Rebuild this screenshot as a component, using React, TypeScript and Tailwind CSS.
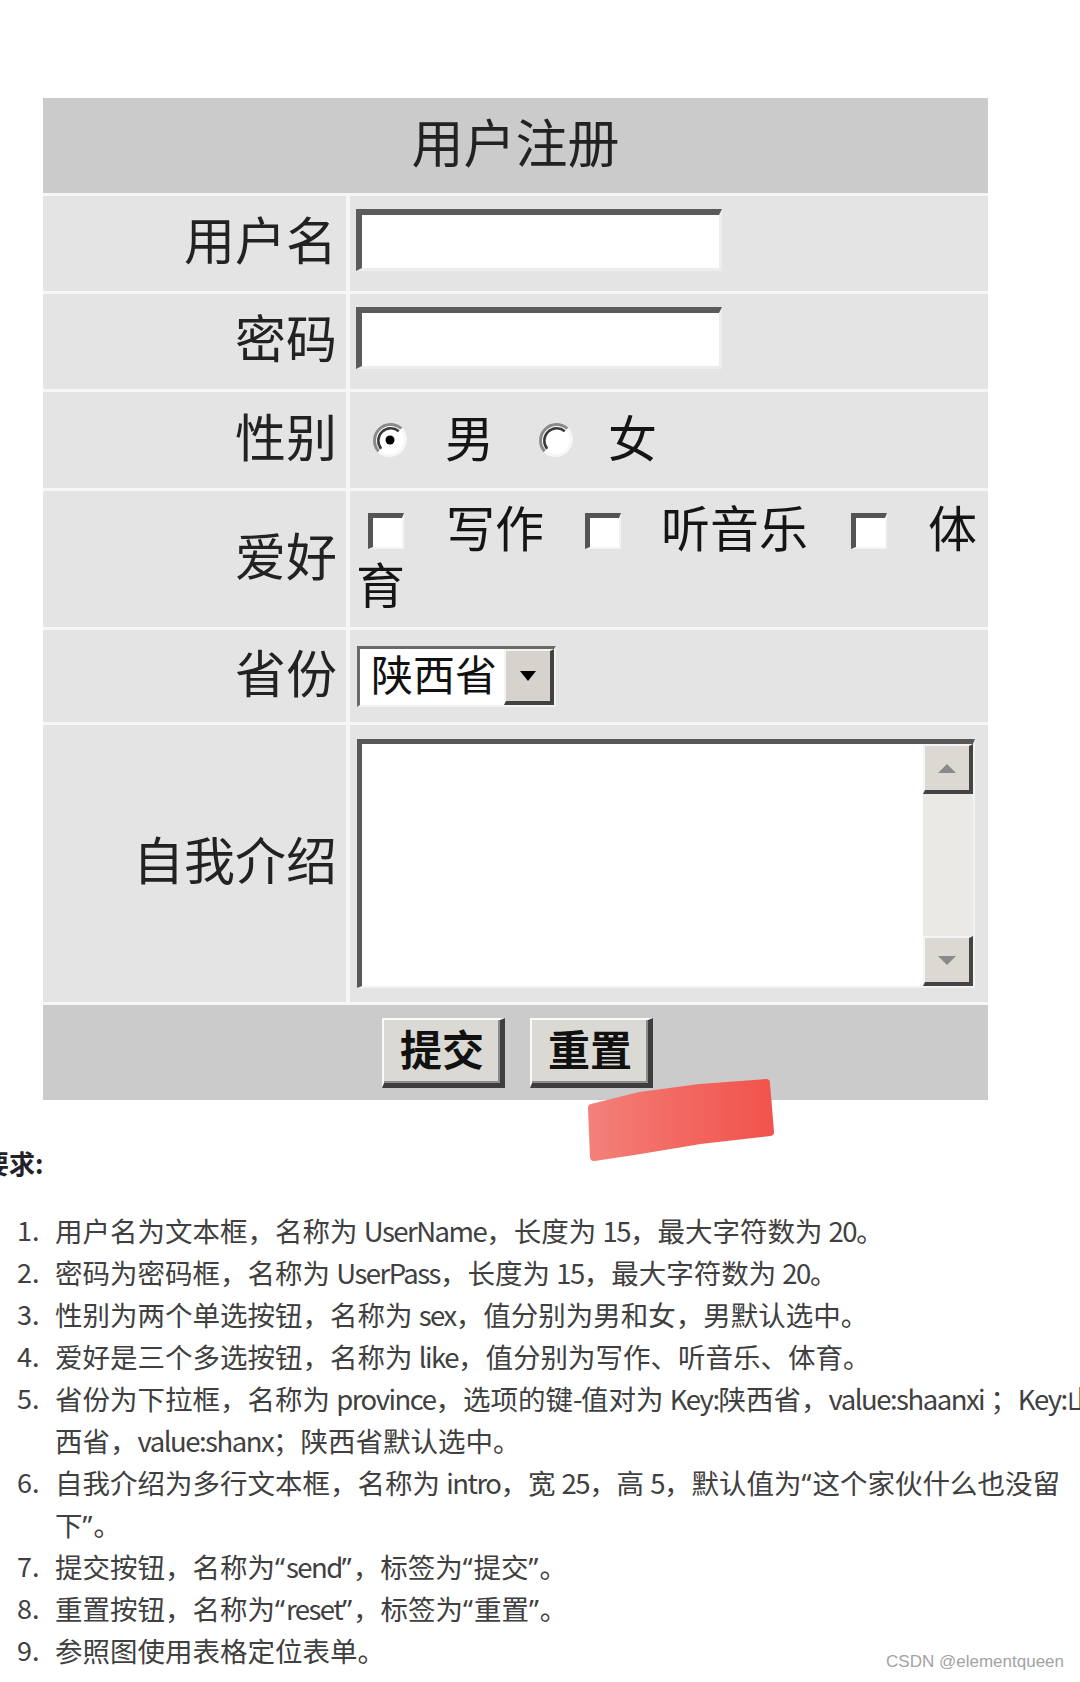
import React from "react";

const Radio = ({ checked }: { checked?: boolean }) => (
  <svg width="36" height="36" viewBox="0 0 36 36" className="shrink-0">
    <circle cx="18" cy="18" r="16" fill="#ffffff" />
    <path d="M 6.7 29.3 A 16 16 0 0 1 29.3 6.7" stroke="#8a8a8a" strokeWidth="3" fill="none" />
    <path d="M 9.2 26.8 A 12.5 12.5 0 0 1 26.8 9.2" stroke="#3a3a3a" strokeWidth="2.5" fill="none" />
    <path d="M 29.3 6.7 A 16 16 0 0 1 6.7 29.3" stroke="#f7f7f7" strokeWidth="3" fill="none" />
    {checked && <circle cx="18" cy="18" r="4.5" fill="#000000" />}
  </svg>
);

const Checkbox = () => (
  <div className="w-[36px] h-[36px] shrink-0 bg-white border-t-[5px] border-l-[5px] border-b-[2px] border-r-[2px] border-t-[#555555] border-l-[#555555] border-b-[#f4f4f4] border-r-[#f4f4f4]" />
);

const Label = ({ children }: { children: React.ReactNode }) => (
  <div className="bg-[#e4e4e4] flex items-center justify-end pr-[9px] pb-[10px] text-[51px] leading-none text-[#222222]">
    {children}
  </div>
);

const renderLine = (s: string) =>
  s.split(/([A-Za-z0-9:\-]+|[“”])/).map((part, i) => {
    if (part === "“" || part === "”")
      return (
        <span key={i} className="font-['Noto_Sans',sans-serif] tracking-[1px] leading-[0]">
          {part}
        </span>
      );
    if (/^[A-Za-z0-9:\-]+$/.test(part))
      return (
        <span key={i} className="tracking-[-1.5px]">
          {part}
        </span>
      );
    return <React.Fragment key={i}>{part}</React.Fragment>;
  });

const items: { n: string; lines: string[] }[] = [
  { n: "1.", lines: ["用户名为文本框，名称为 UserName，长度为 15，最大字符数为 20。"] },
  { n: "2.", lines: ["密码为密码框，名称为 UserPass，长度为 15，最大字符数为 20。"] },
  { n: "3.", lines: ["性别为两个单选按钮，名称为 sex，值分别为男和女，男默认选中。"] },
  { n: "4.", lines: ["爱好是三个多选按钮，名称为 like，值分别为写作、听音乐、体育。"] },
  {
    n: "5.",
    lines: [
      "省份为下拉框，名称为 province，选项的键-值对为 Key:陕西省，value:shaanxi ；Key:山",
      "西省，value:shanx；陕西省默认选中。",
    ],
  },
  {
    n: "6.",
    lines: ["自我介绍为多行文本框，名称为 intro，宽 25，高 5，默认值为“这个家伙什么也没留", "下”。"],
  },
  { n: "7.", lines: ["提交按钮，名称为“send”，标签为“提交”。"] },
  { n: "8.", lines: ["重置按钮，名称为“reset”，标签为“重置”。"] },
  { n: "9.", lines: ["参照图使用表格定位表单。"] },
];

export default function App() {
  return (
    <div className="relative w-[1080px] h-[1682px] overflow-hidden bg-white font-['Noto_Sans_CJK_SC',sans-serif]">
      <div className="pt-[98px] pl-[43px]">
        <div className="w-[945px] flex flex-col gap-[3px] bg-[#f6f6f6]">
          {/* header */}
          <div className="h-[95px] bg-[#cbcbcb] flex items-center justify-center pb-[10px] text-[52px] leading-none text-[#222222]">
            用户注册
          </div>

          {/* username */}
          <div className="h-[95px] grid grid-cols-[303px_1fr] gap-x-[4px]">
            <Label>用户名</Label>
            <div className="bg-[#e4e4e4] flex items-center pl-[6px]">
              <div className="mb-[7px] w-[366px] h-[62px] bg-white border-t-[6px] border-l-[6px] border-b-[3px] border-r-[3px] border-t-[#5b5b5b] border-l-[#5b5b5b] border-b-[#ededed] border-r-[#ededed]" />
            </div>
          </div>

          {/* password */}
          <div className="h-[95px] grid grid-cols-[303px_1fr] gap-x-[4px]">
            <Label>密码</Label>
            <div className="bg-[#e4e4e4] flex items-center pl-[6px]">
              <div className="mb-[7px] w-[366px] h-[62px] bg-white border-t-[6px] border-l-[6px] border-b-[3px] border-r-[3px] border-t-[#5b5b5b] border-l-[#5b5b5b] border-b-[#ededed] border-r-[#ededed]" />
            </div>
          </div>

          {/* sex */}
          <div className="h-[96px] grid grid-cols-[303px_1fr] gap-x-[4px]">
            <Label>性别</Label>
            <div className="bg-[#e4e4e4] flex items-center pl-[22px] text-[49px] leading-none text-[#151515]">
              <Radio checked />
              <span className="ml-[37px] mb-[10px]">男</span>
              <span className="ml-[44px] flex">
                <Radio />
              </span>
              <span className="ml-[34px] mb-[10px]">女</span>
            </div>
          </div>

          {/* hobby */}
          <div className="h-[136px] grid grid-cols-[303px_1fr] gap-x-[4px]">
            <Label>爱好</Label>
            <div className="bg-[#e4e4e4] flex flex-col justify-center pl-[6px] text-[49px] leading-none text-[#151515]">
              <div className="h-[57px] flex items-center">
                <span className="ml-[12px] flex">
                  <Checkbox />
                </span>
                <span className="ml-[42px] mb-[11px]">写作</span>
                <span className="ml-[41px] flex">
                  <Checkbox />
                </span>
                <span className="ml-[40px] mb-[11px]">听音乐</span>
                <span className="ml-[43px] flex">
                  <Checkbox />
                </span>
                <span className="ml-[41px] mb-[11px]">体</span>
              </div>
              <div className="h-[57px] flex items-center pb-[10px]">育</div>
            </div>
          </div>

          {/* province */}
          <div className="h-[92px] grid grid-cols-[303px_1fr] gap-x-[4px]">
            <Label>省份</Label>
            <div className="bg-[#e4e4e4] flex items-center pl-[7px]">
              <div className="w-[199px] h-[61px] flex bg-white border-t-[3px] border-l-[3px] border-b-[2px] border-r-[2px] border-t-[#6a6a6a] border-l-[#6a6a6a] border-b-[#f2f2f2] border-r-[#f2f2f2]">
                <div className="flex-1 flex items-center pl-[11px] pb-[8px] text-[42px] leading-none text-[#111]">陕西省</div>
                <div className="w-[50px] h-full flex items-center justify-center bg-[#d6d3cd] border-t-[2px] border-l-[2px] border-b-[4px] border-r-[4px] border-t-[#f4f4f4] border-l-[#f4f4f4] border-b-[#424242] border-r-[#424242]">
                  <svg width="16" height="10" viewBox="0 0 16 10">
                    <path d="M0 0 L16 0 L8 10 Z" fill="#000" />
                  </svg>
                </div>
              </div>
            </div>
          </div>

          {/* intro */}
          <div className="h-[277px] grid grid-cols-[303px_1fr] gap-x-[4px]">
            <Label>自我介绍</Label>
            <div className="bg-[#e4e4e4] flex items-center pl-[7px]">
              <div className="w-[618px] h-[249px] flex bg-white border-t-[5px] border-l-[5px] border-b-[2px] border-r-[2px] border-t-[#585858] border-l-[#585858] border-b-[#f2f2f2] border-r-[#f2f2f2]">
                <div className="flex-1" />
                <div className="w-[50px] h-full flex flex-col bg-[#ebe9e5]">
                  <div className="h-[50px] flex items-center justify-center bg-[#dcd9d3] border-t-[2px] border-l-[2px] border-b-[4px] border-r-[4px] border-t-[#f4f4f4] border-l-[#f4f4f4] border-b-[#444] border-r-[#444]">
                    <svg width="18" height="9" viewBox="0 0 18 9">
                      <path d="M0 9 L18 9 L9 0 Z" fill="#8a8a8a" />
                    </svg>
                  </div>
                  <div className="flex-1" />
                  <div className="h-[50px] flex items-center justify-center bg-[#dcd9d3] border-t-[2px] border-l-[2px] border-b-[4px] border-r-[4px] border-t-[#f4f4f4] border-l-[#f4f4f4] border-b-[#444] border-r-[#444]">
                    <svg width="18" height="9" viewBox="0 0 18 9">
                      <path d="M0 0 L18 0 L9 9 Z" fill="#8a8a8a" />
                    </svg>
                  </div>
                </div>
              </div>
            </div>
          </div>

          {/* buttons */}
          <div className="h-[95px] bg-[#cbcbcb] flex items-center justify-center gap-[25px] pl-[4px]">
            {["提交", "重置"].map((t) => (
              <div
                key={t}
                className="w-[123px] h-[70px] flex items-center justify-center pb-[6px] bg-[#dbd9d3] border-t-[2px] border-l-[2px] border-b-[5px] border-r-[5px] border-t-[#fafafa] border-l-[#fafafa] border-b-[#3e3e3e] border-r-[#3e3e3e] shadow-[inset_-2px_-2px_0_#8c8c8c] text-[42px] font-bold leading-none text-[#111]"
              >
                {t}
              </div>
            ))}
          </div>
        </div>
      </div>

      {/* requirements */}
      <div className="mt-[42px] h-[42px] leading-[42px] text-[26px] font-bold text-[#222226] ml-[-17px] whitespace-nowrap">
        要求:
      </div>
      <ol className="mt-[25px] pl-[17px] text-[27.5px] leading-[42px] text-[#404040] whitespace-nowrap">
        {items.map((it) => (
          <li key={it.n} className="flex">
            <span className="w-[38px] shrink-0 text-[27px]">{it.n}</span>
            <span>
              {it.lines.map((l, i) => (
                <span key={i} className="block h-[42px]">
                  {renderLine(l)}
                </span>
              ))}
            </span>
          </li>
        ))}
      </ol>

      {/* red marker scribble */}
      <svg className="absolute left-[580px] top-[1078px]" width="200" height="86" viewBox="0 0 200 86">
        <defs>
          <linearGradient id="rg" x1="0" y1="0" x2="1" y2="0">
            <stop offset="0" stopColor="#f4807a" />
            <stop offset="0.45" stopColor="#f26a63" />
            <stop offset="1" stopColor="#f1544c" />
          </linearGradient>
        </defs>
        <path
          d="M12 30 L60 18 L120 10 L186 5 L190 54 L120 62 L60 72 L14 79 Z"
          fill="url(#rg)"
          stroke="url(#rg)"
          strokeWidth="8"
          strokeLinejoin="round"
        />
      </svg>

      <div className="absolute right-[16px] top-[1652px] text-[17px] leading-[20px] text-[#a3a3a3] font-['Liberation_Sans',sans-serif]">
        CSDN @elementqueen
      </div>
    </div>
  );
}
